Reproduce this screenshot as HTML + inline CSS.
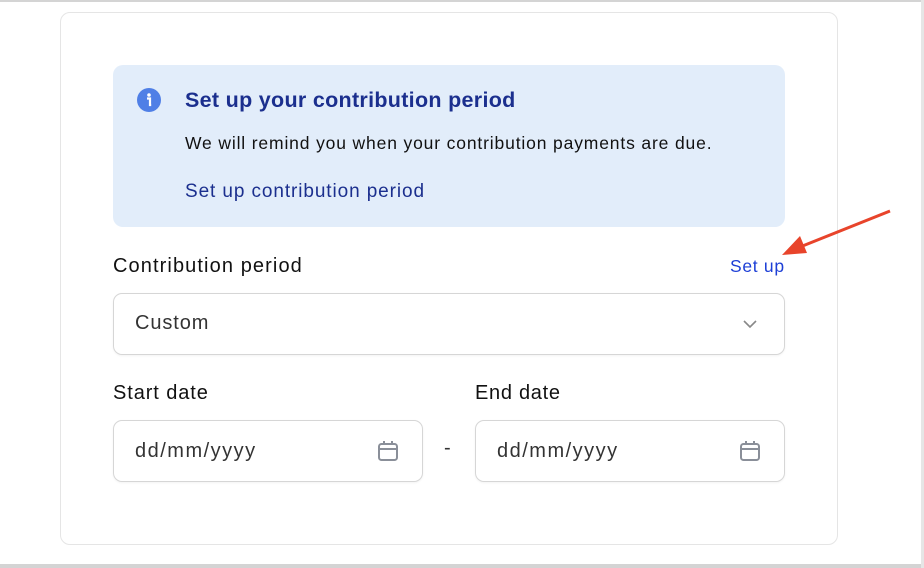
<!DOCTYPE html><html><head><style>
body{margin:0;width:924px;height:568px;background:#fff;font-family:"Liberation Sans",sans-serif;position:relative;overflow:hidden}
.t{position:absolute;left:0;top:0;width:924px;height:2px;background:#d4d4d4}
.b{position:absolute;left:0;top:564px;width:924px;height:4px;background:#d4d4d4}
.r{position:absolute;left:921px;top:0;width:3px;height:568px;background:#e6e6e6}
.card{position:absolute;left:60px;top:12px;width:778px;height:533px;border:1px solid #e5e5e5;border-radius:10px;box-sizing:border-box}
.ban{position:absolute;left:113px;top:65px;width:672px;height:162px;background:#e2edfa;border-radius:10px}
.a{position:absolute;white-space:nowrap}
.box{position:absolute;border:1px solid #d6d6d6;border-radius:9px;box-sizing:border-box;box-shadow:0 1px 2px rgba(0,0,0,.05)}
</style></head><body>
<div class="t"></div><div class="b"></div><div class="r"></div>
<div class="card"></div>
<div class="ban"></div>
<svg style="position:absolute;left:137px;top:88px" width="24" height="24"><circle cx="12" cy="12" r="12" fill="#4f7fe6"/><circle cx="12" cy="7" r="1.8" fill="#fff"/><path d="M10 10.5h3v6.5h1.2" stroke="#fff" stroke-width="2.2" fill="none"/></svg>
<div class="a" style="left:185px;top:88px;font-size:21.5px;font-weight:bold;color:#1b2f8e;letter-spacing:0.3px">Set up your contribution period</div>
<div class="a" style="left:185px;top:133px;font-size:17.5px;color:#111;letter-spacing:0.85px">We will remind you when your contribution payments are due.</div>
<div class="a" style="left:185px;top:181px;font-size:19px;color:#1b2f8e;letter-spacing:0.9px">Set up contribution period</div>
<div class="a" style="left:113px;top:255px;font-size:20px;color:#111;letter-spacing:1.1px">Contribution period</div>
<div class="a" style="left:730px;top:256px;font-size:17.5px;color:#1d3fd6;letter-spacing:0.7px">Set up</div>
<svg style="position:absolute;left:770px;top:205px" width="125" height="55"><line x1="120" y1="6" x2="25" y2="44" stroke="#e8442b" stroke-width="3"/><polygon points="12,50 30,31 37,48" fill="#e8442b"/></svg>
<div class="box" style="left:113px;top:293px;width:672px;height:62px"></div>
<div class="a" style="left:135px;top:312px;font-size:20px;color:#333;letter-spacing:0.9px">Custom</div>
<svg style="position:absolute;left:742px;top:318px" width="16" height="12"><path d="M2 3l6 6 6-6" stroke="#888" stroke-width="1.6" fill="none"/></svg>
<div class="a" style="left:113px;top:382px;font-size:20px;color:#111;letter-spacing:0.9px">Start date</div>
<div class="a" style="left:475px;top:382px;font-size:20px;color:#111;letter-spacing:0.7px">End date</div>
<div class="box" style="left:113px;top:420px;width:310px;height:62px"></div>
<div class="box" style="left:475px;top:420px;width:310px;height:62px"></div>
<div class="a" style="left:135px;top:440px;font-size:20px;color:#333;letter-spacing:1.5px">dd/mm/yyyy</div>
<div class="a" style="left:497px;top:440px;font-size:20px;color:#333;letter-spacing:1.5px">dd/mm/yyyy</div>
<div class="a" style="left:444px;top:437px;font-size:20px;color:#333">-</div>
<svg style="position:absolute;left:377px;top:440px" width="22" height="22"><rect x="2" y="4" width="18" height="16" rx="2.5" stroke="#8a8f99" stroke-width="2" fill="none"/><line x1="2" y1="9" x2="20" y2="9" stroke="#8a8f99" stroke-width="2"/><line x1="7" y1="1" x2="7" y2="5" stroke="#8a8f99" stroke-width="2"/><line x1="15" y1="1" x2="15" y2="5" stroke="#8a8f99" stroke-width="2"/></svg>
<svg style="position:absolute;left:739px;top:440px" width="22" height="22"><rect x="2" y="4" width="18" height="16" rx="2.5" stroke="#8a8f99" stroke-width="2" fill="none"/><line x1="2" y1="9" x2="20" y2="9" stroke="#8a8f99" stroke-width="2"/><line x1="7" y1="1" x2="7" y2="5" stroke="#8a8f99" stroke-width="2"/><line x1="15" y1="1" x2="15" y2="5" stroke="#8a8f99" stroke-width="2"/></svg>
</body></html>
